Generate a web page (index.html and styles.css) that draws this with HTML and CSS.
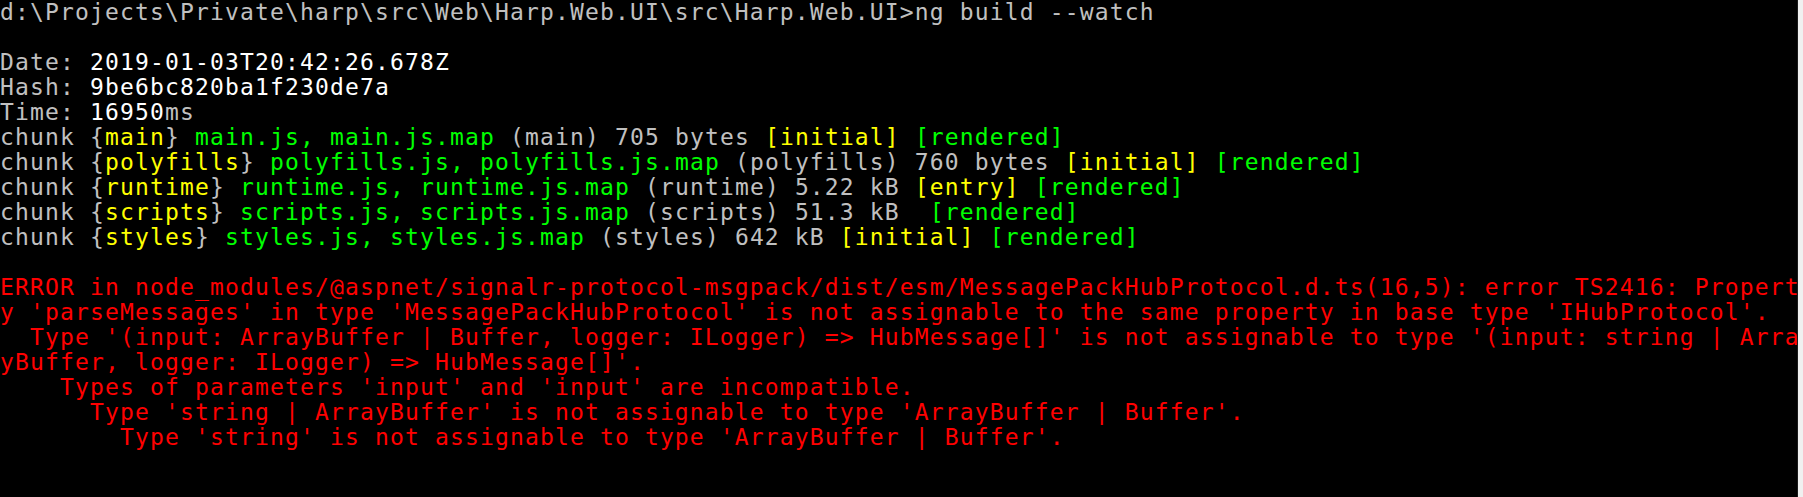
FILE: index.html
```html
<!DOCTYPE html>
<html>
<head>
<meta charset="utf-8">
<link rel="stylesheet" href="styles.css">
</head>
<body>
<div class="window">
  <div class="console">
    <div class="line g">d:\Projects\Private\harp\src\Web\Harp.Web.UI\src\Harp.Web.UI&gt;ng build --watch</div>
    <div class="line"> </div>
    <div class="line g">Date: <span class="w">2019-01-03T20:42:26.678Z</span></div>
    <div class="line g">Hash: <span class="w">9be6bc820ba1f230de7a</span></div>
    <div class="line g">Time: <span class="w">16950</span>ms</div>
    <div class="line g">chunk {<span class="y">main</span>} <span class="gr">main.js, main.js.map</span> (main) 705 bytes <span class="y">[initial]</span> <span class="gr">[rendered]</span></div>
    <div class="line g">chunk {<span class="y">polyfills</span>} <span class="gr">polyfills.js, polyfills.js.map</span> (polyfills) 760 bytes <span class="y">[initial]</span> <span class="gr">[rendered]</span></div>
    <div class="line g">chunk {<span class="y">runtime</span>} <span class="gr">runtime.js, runtime.js.map</span> (runtime) 5.22 kB <span class="y">[entry]</span> <span class="gr">[rendered]</span></div>
    <div class="line g">chunk {<span class="y">scripts</span>} <span class="gr">scripts.js, scripts.js.map</span> (scripts) 51.3 kB  <span class="gr">[rendered]</span></div>
    <div class="line g">chunk {<span class="y">styles</span>} <span class="gr">styles.js, styles.js.map</span> (styles) 642 kB <span class="y">[initial]</span> <span class="gr">[rendered]</span></div>
    <div class="line"> </div>
    <div class="line r">ERROR in node_modules/@aspnet/signalr-protocol-msgpack/dist/esm/MessagePackHubProtocol.d.ts(16,5): error TS2416: Propert</div>
    <div class="line r">y 'parseMessages' in type 'MessagePackHubProtocol' is not assignable to the same property in base type 'IHubProtocol'.</div>
    <div class="line r">  Type '(input: ArrayBuffer | Buffer, logger: ILogger) =&gt; HubMessage[]' is not assignable to type '(input: string | Arra</div>
    <div class="line r">yBuffer, logger: ILogger) =&gt; HubMessage[]'.</div>
    <div class="line r">    Types of parameters 'input' and 'input' are incompatible.</div>
    <div class="line r">      Type 'string | ArrayBuffer' is not assignable to type 'ArrayBuffer | Buffer'.</div>
    <div class="line r">        Type 'string' is not assignable to type 'ArrayBuffer | Buffer'.</div>
  </div>
  <div class="scrollbar"></div>
</div>
</body>
</html>
```

FILE: styles.css
```css
html, body {
  margin: 0;
  padding: 0;
  background: #000;
}

.window {
  display: flex;
  width: 1803px;
  height: 497px;
  overflow: hidden;
}

.console {
  width: 1797px;
  height: 497px;
  flex: none;
  background: #000;
  overflow: hidden;
  font-family: "DejaVu Sans Mono", monospace;
  font-size: 23px;
  letter-spacing: 1.15px;
  line-height: 25px;
}

.scrollbar {
  flex: 1;
  background: #f0f0f0;
  border-left: 1px solid #1a1a1a;
}

.line {
  height: 25px;
  white-space: pre;
}

.g { color: #c0c0c0; }
.w { color: #ffffff; }
.y { color: #ffff00; }
.gr { color: #00ff00; }
.r { color: #ff0000; }
```
